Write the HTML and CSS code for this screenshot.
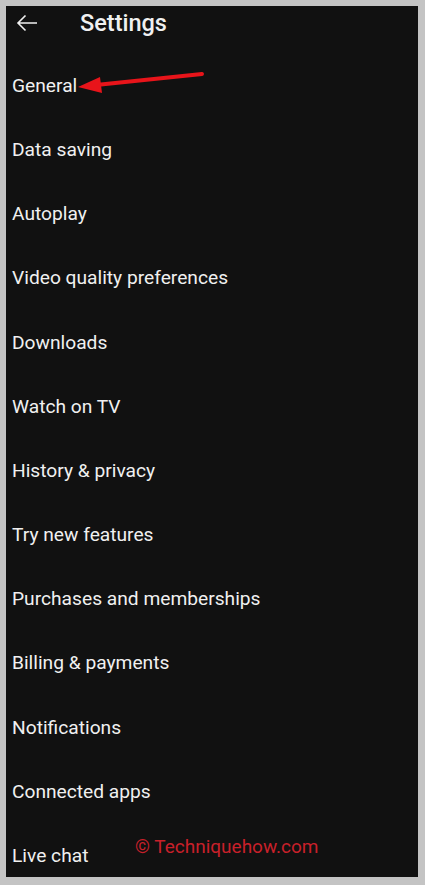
FILE: index.html
```html
<!DOCTYPE html>
<html lang="en">
<head>
    <meta charset="UTF-8">
    <meta name="viewport" content="width=device-width, initial-scale=1.0">
    <title>Settings</title>
    <link rel="stylesheet" href="styles.css">
</head>
<body>
    <div class="screen">
        <div class="header">
            <svg class="back" width="22" height="18" viewBox="0 0 22 18">
                <path d="M21 9H2 M9.5 1.5L2 9l7.5 7.5" fill="none" stroke="#f0f0f0" stroke-width="1.6"/>
            </svg>
            <h1 class="title">Settings</h1>
        </div>
        <ul class="menu">
            <li>General</li>
            <li>Data saving</li>
            <li>Autoplay</li>
            <li>Video quality preferences</li>
            <li>Downloads</li>
            <li>Watch on TV</li>
            <li>History &amp; privacy</li>
            <li>Try new features</li>
            <li>Purchases and memberships</li>
            <li>Billing &amp; payments</li>
            <li>Notifications</li>
            <li>Connected apps</li>
            <li>Live chat</li>
        </ul>
        <div class="watermark">© Techniquehow.com</div>
    </div>

    <!-- annotation arrow pointing at "General" -->
    <svg class="pointer" width="140" height="30" viewBox="0 0 140 30">
        <path d="M126 8L20 19" stroke="#e8141a" stroke-width="4" stroke-linecap="round"/>
        <path d="M2 21L24 11L26 27Z" fill="#e8141a"/>
    </svg>
</body>
</html>
```

FILE: styles.css
```css
body {
    margin: 0;
    background-color: #c4c4c4;
    font-family: Roboto, "Liberation Sans", sans-serif;
    position: relative;
}
.screen {
    position: relative;
    margin: 6px 7px 0 6px;
    height: 871px;
    background-color: #111111;
    color: #f0f0f0;
    overflow: hidden;
}
.header {
    display: flex;
    align-items: center;
    height: 34px;
}
.back {
    margin-left: 10px;
}
.title {
    margin: 0 0 0 42px;
    font-size: 23.5px;
    font-weight: 500;
}
.menu {
    list-style: none;
    margin: 13.8px 0 0 0;
    padding: 0;
}
.menu li {
    height: 64.2px;
    line-height: 64.2px;
    padding-left: 6px;
    font-size: 19.2px;
}
.watermark {
    position: absolute;
    left: 129px;
    top: 829px;
    font-size: 19px;
    color: #c8202a;
}
.pointer {
    position: absolute;
    left: 76px;
    top: 66px;
}
```
